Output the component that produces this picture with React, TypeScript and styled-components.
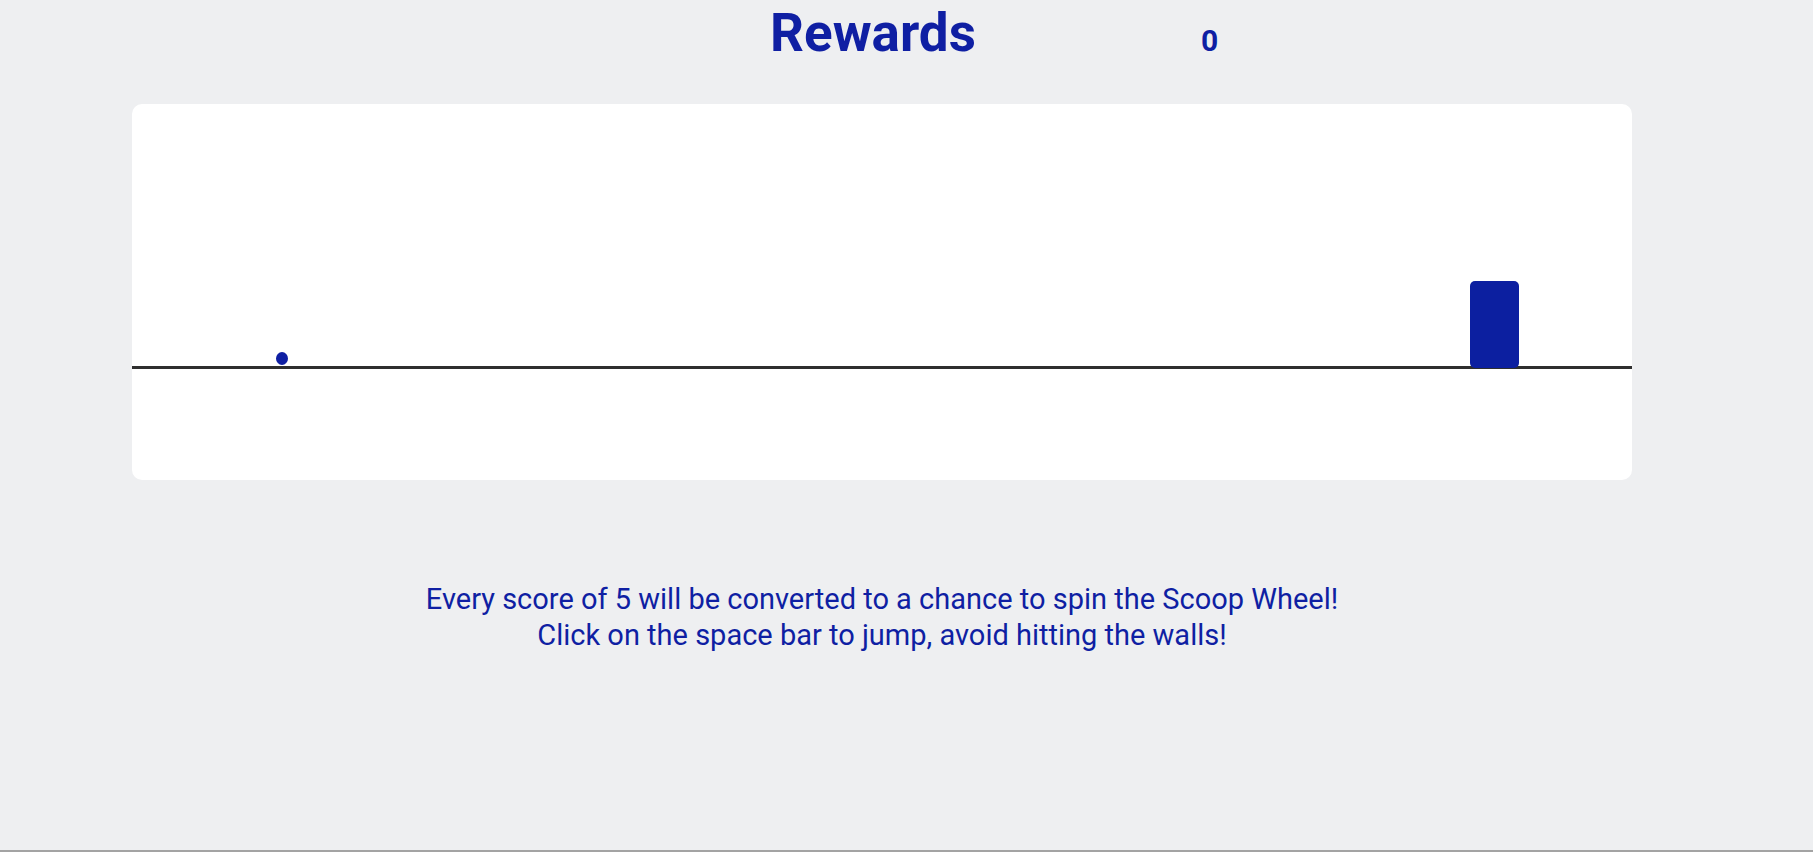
import styled, { createGlobalStyle } from "styled-components";

const GlobalStyle = createGlobalStyle`
  html, body {
    margin: 0;
    padding: 0;
    background: #eeeff1;
  }
`;

const Page = styled.div`
  height: 850px;
  border-bottom: 2px solid #a3a3a3;
  font-family: Roboto, "Noto Sans", sans-serif;
  color: #0f1fa3;
`;

const Content = styled.div`
  width: 1764px;
  display: flex;
  flex-direction: column;
  align-items: center;
`;

const Header = styled.div`
  width: 100%;
  box-sizing: border-box;
  padding-right: 18px;
  display: grid;
  grid-template-columns: 1fr auto 1fr;
  align-items: baseline;
  height: 70px;
`;

const Title = styled.h1`
  grid-column: 2;
  margin: 0;
  font-size: 53px;
  line-height: 66px;
  font-weight: 700;
`;

const Score = styled.span`
  grid-column: 3;
  margin-left: 225px;
  font-size: 30px;
  font-weight: 700;
`;

const Board = styled.div`
  margin-top: 34px;
  width: 85%;
  height: 376px;
  background: #ffffff;
  border-radius: 10px;
  display: flex;
  flex-direction: column;
  overflow: hidden;
`;

const Sky = styled.div`
  position: relative;
  height: 262px;
`;

const Ground = styled.div`
  height: 0;
  border-top: 3px solid #2f2f2f;
`;

const Ball = styled.div<{ x: number }>`
  position: absolute;
  left: ${(p) => p.x}px;
  bottom: 1px;
  width: 12px;
  height: 13px;
  border-radius: 50%;
  background: #0f1fa3;
`;

const Wall = styled.div<{ x: number; h: number }>`
  position: absolute;
  left: ${(p) => p.x}px;
  bottom: -2px;
  width: 49px;
  height: ${(p) => p.h}px;
  border-radius: 5px;
  background: #0c1fa0;
  z-index: 1;
`;

const Info = styled.p`
  margin: 101px 0 0;
  text-align: center;
  font-size: 29px;
  line-height: 36px;
  font-weight: 400;
`;

export default function App() {
  const score = 0;
  return (
    <Page>
      <GlobalStyle />
      <Content>
        <Header>
          <Title>Rewards</Title>
          <Score>{score}</Score>
        </Header>
        <Board>
          <Sky>
            <Ball x={144} />
            <Wall x={1338} h={87} />
          </Sky>
          <Ground />
        </Board>
        <Info>
          Every score of 5 will be converted to a chance to spin the Scoop Wheel!
          <br />
          Click on the space bar to jump, avoid hitting the walls!
        </Info>
      </Content>
    </Page>
  );
}
